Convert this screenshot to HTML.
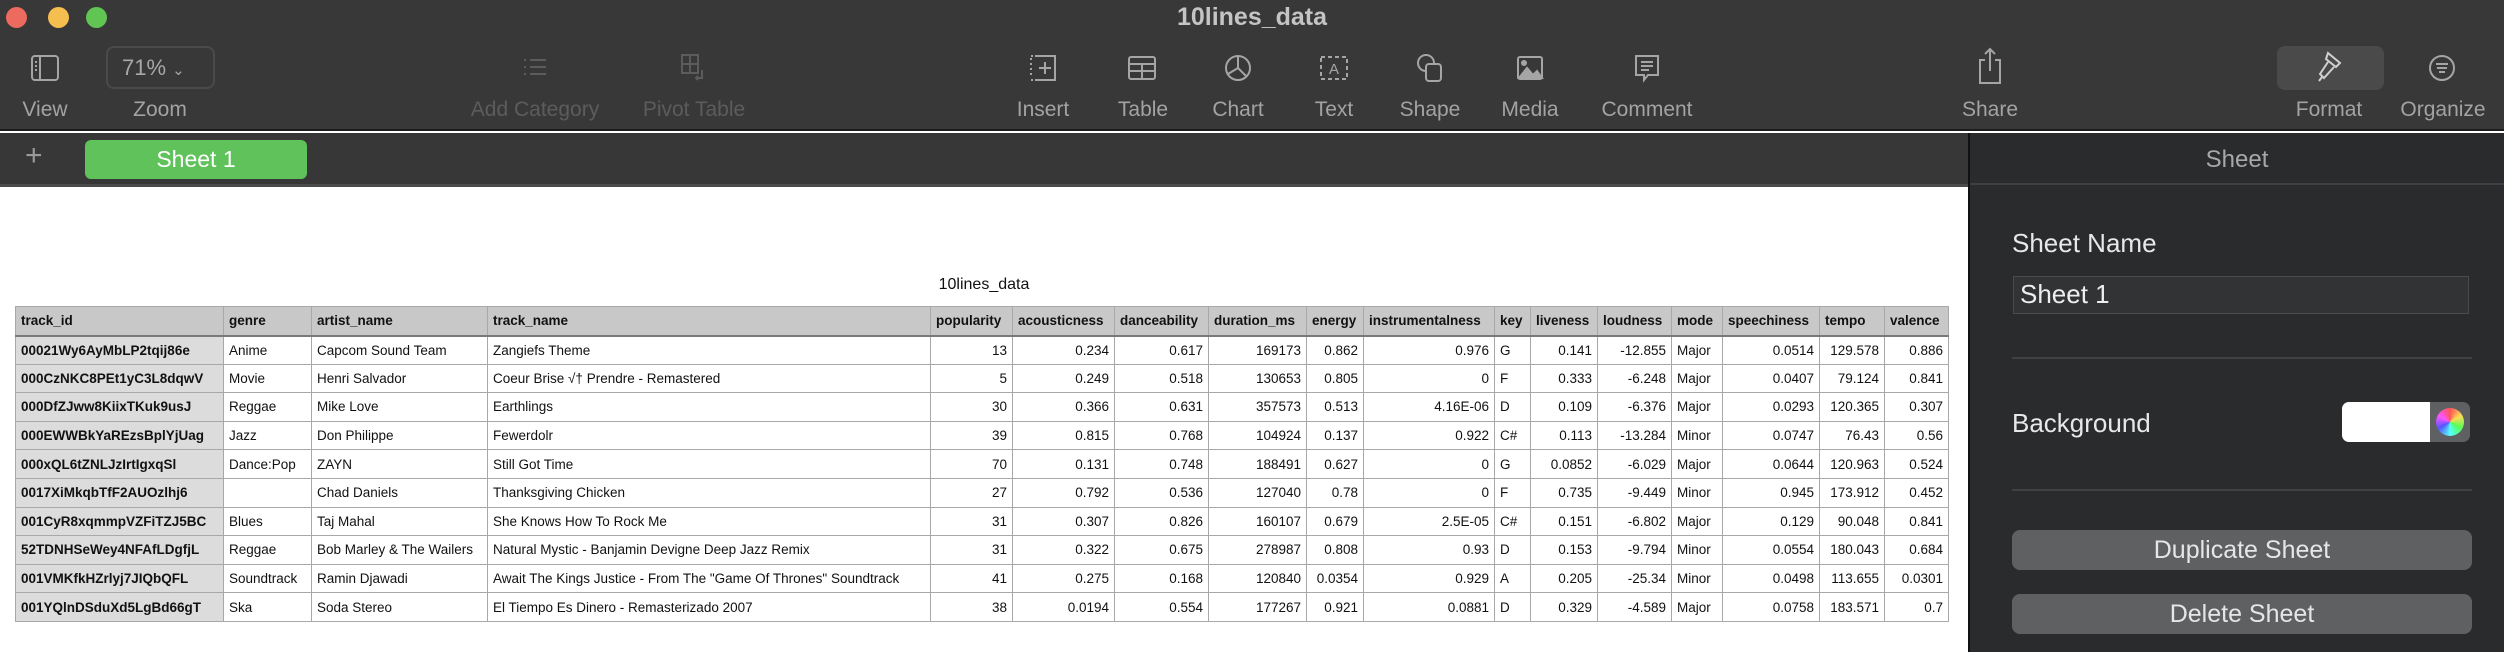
<!DOCTYPE html>
<html><head><meta charset="utf-8"><style>
*{margin:0;padding:0;box-sizing:border-box}
body{width:2504px;height:652px;overflow:hidden;background:#fff;font-family:"Liberation Sans",sans-serif;position:relative}
.abs{position:absolute}
#tb{left:0;top:0;width:2504px;height:131px;background:#383838;border-bottom:2px solid #1c1c1c}
.dot{position:absolute;top:7px;width:21px;height:21px;border-radius:50%}
.lbl{position:absolute;top:98px;font-size:21px;color:#a3a3a3;transform:translateX(-50%);white-space:nowrap}
.dis{color:#5c5c5c}
.ic{position:absolute;top:52px;transform:translateX(-50%)}
#tabs{left:0;top:133px;width:1968px;height:54px;background:#373737;border-bottom:3px solid #4a4a4a}
#panel{left:1968px;top:133px;width:536px;height:519px;background:#2a2b2d;border-left:2px solid #111}
table{position:absolute;left:15px;top:306px;border-collapse:collapse;table-layout:fixed;font-size:13.5px;color:#111}
td,th{border:1.5px solid #a8a8a8;height:28.6px;padding:0 5px;white-space:nowrap;overflow:hidden;text-align:left;font-weight:normal}
th{background:#c8c8c8;font-weight:bold;height:29px;border-bottom:2px solid #7a7a7a}
td.f{background:#dcdcdc;font-weight:bold}
td.n{text-align:right}
.btn{position:absolute;left:42px;width:460px;height:40px;background:#5f6062;border-radius:8px;color:#e6e6e6;font-size:25px;text-align:center;line-height:40px}
.hr{position:absolute;left:42px;width:460px;height:2px;background:#404144}
</style></head><body>
<div id="tb" class="abs">
<div class="dot" style="left:6px;background:#ec6a5e"></div>
<div class="dot" style="left:48px;background:#f4bf4f"></div>
<div class="dot" style="left:86px;background:#61c554"></div>
<div class="abs" style="left:0;width:2504px;top:3px;text-align:center;font-size:25px;font-weight:bold;color:#c4c4c4">10lines_data</div>

<svg class="ic" style="left:45px" width="32" height="32" viewBox="0 0 32 32" fill="none" stroke="#a5a5a5" stroke-width="2"><rect x="3" y="4" width="26" height="24" rx="3"/><line x1="11" y1="4" x2="11" y2="28"/><line x1="6" y1="10" x2="8" y2="10"/><line x1="6" y1="14" x2="8" y2="14"/><line x1="6" y1="18" x2="8" y2="18"/></svg>
<div class="abs" style="left:106px;top:46px;width:109px;height:43px;border:2px solid #4a4a4a;border-radius:8px;color:#a8a8a8;font-size:22px;line-height:39px;padding-left:14px">71% <span style="font-size:15px">&#8964;</span></div>
<svg class="ic" style="left:535px" width="32" height="32" viewBox="0 0 32 32" fill="none" stroke="#5c5c5c" stroke-width="2"><line x1="5" y1="8" x2="7" y2="8"/><line x1="11" y1="8" x2="27" y2="8"/><line x1="5" y1="15" x2="7" y2="15"/><line x1="11" y1="15" x2="27" y2="15"/><line x1="5" y1="22" x2="7" y2="22"/><line x1="11" y1="22" x2="27" y2="22"/></svg>
<svg class="ic" style="left:693px" width="32" height="32" viewBox="0 0 32 32" fill="none" stroke="#5c5c5c" stroke-width="2"><rect x="5" y="3" width="16" height="18"/><line x1="13" y1="3" x2="13" y2="21"/><line x1="5" y1="12" x2="21" y2="12"/><path d="M25 18v8h-6m2-2l-2 2 2 2"/></svg>
<svg class="ic" style="left:1043px" width="32" height="32" viewBox="0 0 32 32" fill="none" stroke="#a5a5a5" stroke-width="2"><path d="M8 4h20v24H8"/><line x1="4" y1="4" x2="6" y2="4"/><line x1="4" y1="28" x2="6" y2="28"/><line x1="4" y1="6" x2="4" y2="26" stroke-dasharray="2 3"/><line x1="18" y1="10" x2="18" y2="22"/><line x1="12" y1="16" x2="24" y2="16"/></svg>
<svg class="ic" style="left:1142px" width="32" height="32" viewBox="0 0 32 32" fill="none" stroke="#a5a5a5" stroke-width="2"><rect x="3" y="5" width="26" height="22" rx="2"/><line x1="3" y1="12" x2="29" y2="12"/><line x1="3" y1="19" x2="29" y2="19"/><line x1="16" y1="12" x2="16" y2="27"/></svg>
<svg class="ic" style="left:1238px" width="32" height="32" viewBox="0 0 32 32" fill="none" stroke="#a5a5a5" stroke-width="2"><circle cx="16" cy="16" r="12"/><path d="M16 4v12l8 8M16 16l-10 6"/></svg>
<svg class="ic" style="left:1334px" width="32" height="32" viewBox="0 0 32 32" fill="none" stroke="#a5a5a5" stroke-width="2"><rect x="3" y="5" width="26" height="22" stroke-dasharray="4 3"/><text x="16" y="22" font-size="15" text-anchor="middle" fill="#a5a5a5" stroke="none" font-family="Liberation Sans">A</text></svg>
<svg class="ic" style="left:1430px" width="32" height="32" viewBox="0 0 32 32" fill="none" stroke="#a5a5a5" stroke-width="2"><circle cx="12" cy="11" r="8"/><rect x="12" y="12" width="15" height="17" rx="3" fill="#383838"/></svg>
<svg class="ic" style="left:1530px" width="32" height="32" viewBox="0 0 32 32" fill="none" stroke="#a5a5a5" stroke-width="2"><rect x="4" y="5" width="24" height="22" rx="2"/><path d="M5 26l8-10 6 7 4-4 5 7z" fill="#a5a5a5"/><circle cx="10" cy="11" r="2" fill="#a5a5a5"/></svg>
<svg class="ic" style="left:1647px" width="32" height="32" viewBox="0 0 32 32" fill="none" stroke="#a5a5a5" stroke-width="2"><path d="M5 4h22v19H17l-4 5v-5H5z"/><line x1="10" y1="10" x2="22" y2="10"/><line x1="10" y1="14" x2="22" y2="14"/><line x1="10" y1="18" x2="18" y2="18"/></svg>
<svg class="ic" style="left:1990px;top:46px" width="32" height="40" viewBox="0 0 32 40" fill="none" stroke="#a5a5a5" stroke-width="2"><path d="M11 14H6v23h20V14h-5M16 3v22M11 8l5-5 5 5"/></svg>
<div class="abs" style="left:2277px;top:46px;width:107px;height:44px;background:#4a4a4a;border-radius:8px"></div>
<svg class="ic" style="left:2330px;top:50px" width="32" height="34" viewBox="0 0 32 34" fill="none" stroke="#d0d0d0" stroke-width="2"><path d="M14 3l12 10-4 4-10-8zM14 12l-8 12 4 4 10-11M8 27l-3 4"/></svg>
<svg class="ic" style="left:2442px" width="32" height="32" viewBox="0 0 32 32" fill="none" stroke="#a5a5a5" stroke-width="2"><circle cx="16" cy="16" r="12"/><line x1="10" y1="12" x2="22" y2="12"/><line x1="11" y1="16" x2="21" y2="16"/><line x1="13" y1="20" x2="19" y2="20"/></svg>

<div class="lbl" style="left:45px">View</div>
<div class="lbl" style="left:160px">Zoom</div>
<div class="lbl dis" style="left:535px">Add Category</div>
<div class="lbl dis" style="left:694px">Pivot Table</div>
<div class="lbl" style="left:1043px">Insert</div>
<div class="lbl" style="left:1143px">Table</div>
<div class="lbl" style="left:1238px">Chart</div>
<div class="lbl" style="left:1334px">Text</div>
<div class="lbl" style="left:1430px">Shape</div>
<div class="lbl" style="left:1530px">Media</div>
<div class="lbl" style="left:1647px">Comment</div>
<div class="lbl" style="left:1990px">Share</div>
<div class="lbl" style="left:2329px">Format</div>
<div class="lbl" style="left:2443px">Organize</div>
</div>

<div id="tabs" class="abs">
<div class="abs" style="left:25px;top:6px;font-size:30px;color:#9a9a9a;font-weight:300">+</div>
<div class="abs" style="left:85px;top:7px;width:222px;height:39px;background:#5fc25a;border-radius:6px;color:#fff;font-size:23px;text-align:center;line-height:39px">Sheet 1</div>
</div>

<div id="panel" class="abs">
<div class="abs" style="left:0;width:534px;top:13px;text-align:center;font-size:24px;color:#a8a8a8">Sheet</div>
<div class="abs" style="left:0;top:50px;width:534px;height:2px;background:#3e3f42"></div>
<div class="abs" style="left:42px;top:95px;font-size:26px;color:#e8e8e8">Sheet Name</div>
<div class="abs" style="left:43px;top:143px;width:456px;height:38px;background:#323335;border:1.5px solid #4a4b4d;color:#eee;font-size:26px;line-height:34px;padding-left:6px">Sheet 1</div>
<div class="hr" style="top:224px"></div>
<div class="abs" style="left:42px;top:275px;font-size:26px;color:#e8e8e8">Background</div>
<div class="abs" style="left:372px;top:269px;width:128px;height:40px;background:#5f6062;border-radius:7px;overflow:hidden"><div style="width:88px;height:40px;background:#fff"></div>
<div class="abs" style="left:94px;top:6px;width:28px;height:28px;border-radius:50%;background:conic-gradient(#f55,#fd5,#5f5,#5ff,#55f,#f5f,#f55)"></div></div>
<div class="hr" style="top:356px"></div>
<div class="btn" style="top:397px">Duplicate Sheet</div>
<div class="btn" style="top:461px">Delete Sheet</div>
</div>

<div class="abs" style="left:0;width:1968px;top:276px;text-align:center;font-size:16px;color:#111">10lines_data</div>

<table>
<colgroup><col style="width:208px"><col style="width:88px"><col style="width:176px"><col style="width:443px"><col style="width:82px"><col style="width:102px"><col style="width:94px"><col style="width:98px"><col style="width:57px"><col style="width:131px"><col style="width:36px"><col style="width:67px"><col style="width:74px"><col style="width:51px"><col style="width:97px"><col style="width:65px"><col style="width:64px"></colgroup>
<tr><th>track_id</th><th>genre</th><th>artist_name</th><th>track_name</th><th>popularity</th><th>acousticness</th><th>danceability</th><th>duration_ms</th><th>energy</th><th>instrumentalness</th><th>key</th><th>liveness</th><th>loudness</th><th>mode</th><th>speechiness</th><th>tempo</th><th>valence</th></tr>
<tr><td class="f">00021Wy6AyMbLP2tqij86e</td><td>Anime</td><td>Capcom Sound Team</td><td>Zangiefs Theme</td><td class="n">13</td><td class="n">0.234</td><td class="n">0.617</td><td class="n">169173</td><td class="n">0.862</td><td class="n">0.976</td><td>G</td><td class="n">0.141</td><td class="n">-12.855</td><td>Major</td><td class="n">0.0514</td><td class="n">129.578</td><td class="n">0.886</td></tr>
<tr><td class="f">000CzNKC8PEt1yC3L8dqwV</td><td>Movie</td><td>Henri Salvador</td><td>Coeur Brise √† Prendre - Remastered</td><td class="n">5</td><td class="n">0.249</td><td class="n">0.518</td><td class="n">130653</td><td class="n">0.805</td><td class="n">0</td><td>F</td><td class="n">0.333</td><td class="n">-6.248</td><td>Major</td><td class="n">0.0407</td><td class="n">79.124</td><td class="n">0.841</td></tr>
<tr><td class="f">000DfZJww8KiixTKuk9usJ</td><td>Reggae</td><td>Mike Love</td><td>Earthlings</td><td class="n">30</td><td class="n">0.366</td><td class="n">0.631</td><td class="n">357573</td><td class="n">0.513</td><td class="n">4.16E-06</td><td>D</td><td class="n">0.109</td><td class="n">-6.376</td><td>Major</td><td class="n">0.0293</td><td class="n">120.365</td><td class="n">0.307</td></tr>
<tr><td class="f">000EWWBkYaREzsBplYjUag</td><td>Jazz</td><td>Don Philippe</td><td>Fewerdolr</td><td class="n">39</td><td class="n">0.815</td><td class="n">0.768</td><td class="n">104924</td><td class="n">0.137</td><td class="n">0.922</td><td>C#</td><td class="n">0.113</td><td class="n">-13.284</td><td>Minor</td><td class="n">0.0747</td><td class="n">76.43</td><td class="n">0.56</td></tr>
<tr><td class="f">000xQL6tZNLJzIrtIgxqSl</td><td>Dance:Pop</td><td>ZAYN</td><td>Still Got Time</td><td class="n">70</td><td class="n">0.131</td><td class="n">0.748</td><td class="n">188491</td><td class="n">0.627</td><td class="n">0</td><td>G</td><td class="n">0.0852</td><td class="n">-6.029</td><td>Major</td><td class="n">0.0644</td><td class="n">120.963</td><td class="n">0.524</td></tr>
<tr><td class="f">0017XiMkqbTfF2AUOzlhj6</td><td></td><td>Chad Daniels</td><td>Thanksgiving Chicken</td><td class="n">27</td><td class="n">0.792</td><td class="n">0.536</td><td class="n">127040</td><td class="n">0.78</td><td class="n">0</td><td>F</td><td class="n">0.735</td><td class="n">-9.449</td><td>Minor</td><td class="n">0.945</td><td class="n">173.912</td><td class="n">0.452</td></tr>
<tr><td class="f">001CyR8xqmmpVZFiTZJ5BC</td><td>Blues</td><td>Taj Mahal</td><td>She Knows How To Rock Me</td><td class="n">31</td><td class="n">0.307</td><td class="n">0.826</td><td class="n">160107</td><td class="n">0.679</td><td class="n">2.5E-05</td><td>C#</td><td class="n">0.151</td><td class="n">-6.802</td><td>Major</td><td class="n">0.129</td><td class="n">90.048</td><td class="n">0.841</td></tr>
<tr><td class="f">52TDNHSeWey4NFAfLDgfjL</td><td>Reggae</td><td>Bob Marley &amp; The Wailers</td><td>Natural Mystic - Banjamin Devigne Deep Jazz Remix</td><td class="n">31</td><td class="n">0.322</td><td class="n">0.675</td><td class="n">278987</td><td class="n">0.808</td><td class="n">0.93</td><td>D</td><td class="n">0.153</td><td class="n">-9.794</td><td>Minor</td><td class="n">0.0554</td><td class="n">180.043</td><td class="n">0.684</td></tr>
<tr><td class="f">001VMKfkHZrlyj7JIQbQFL</td><td>Soundtrack</td><td>Ramin Djawadi</td><td>Await The Kings Justice - From The "Game Of Thrones" Soundtrack</td><td class="n">41</td><td class="n">0.275</td><td class="n">0.168</td><td class="n">120840</td><td class="n">0.0354</td><td class="n">0.929</td><td>A</td><td class="n">0.205</td><td class="n">-25.34</td><td>Minor</td><td class="n">0.0498</td><td class="n">113.655</td><td class="n">0.0301</td></tr>
<tr><td class="f">001YQlnDSduXd5LgBd66gT</td><td>Ska</td><td>Soda Stereo</td><td>El Tiempo Es Dinero - Remasterizado 2007</td><td class="n">38</td><td class="n">0.0194</td><td class="n">0.554</td><td class="n">177267</td><td class="n">0.921</td><td class="n">0.0881</td><td>D</td><td class="n">0.329</td><td class="n">-4.589</td><td>Major</td><td class="n">0.0758</td><td class="n">183.571</td><td class="n">0.7</td></tr>
</table>
</body></html>
